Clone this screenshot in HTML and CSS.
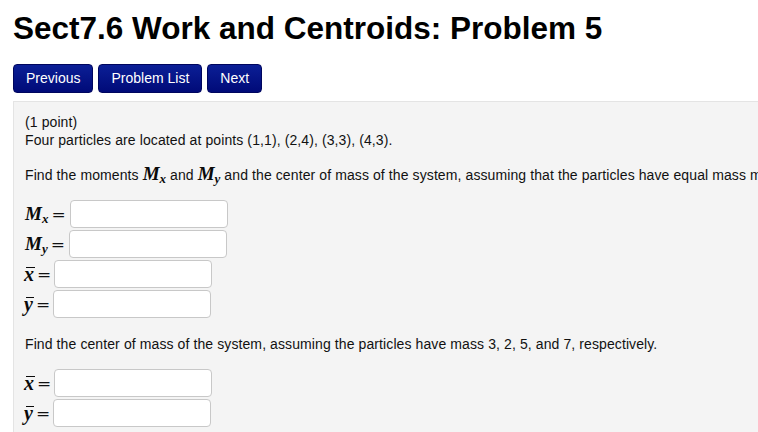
FILE: index.html
```
<!DOCTYPE html>
<html lang="en">
<head>
    <meta charset="UTF-8">
    <meta name="viewport" content="width=device-width, initial-scale=1.0">
    <title>Sect7.6 Work and Centroids: Problem 5</title>
    <link rel="stylesheet" href="styles.css">
</head>
<body>
    <h1 class="page-title">Sect7.6 Work and Centroids: Problem 5</h1>

    <div class="nav-buttons">
        <a class="nav-btn" href="#">Previous</a>
        <a class="nav-btn" href="#">Problem List</a>
        <a class="nav-btn" href="#">Next</a>
    </div>

    <div class="problem">
        <p class="intro">(1 point)<br>Four particles are located at points (1,1), (2,4), (3,3), (4,3).</p>

        <p class="question">Find the moments <span class="math">M<sub>x</sub></span> and <span class="math">M<sub>y</sub></span> and the center of mass of the system, assuming that the particles have equal mass m.</p>

        <div class="answers">
            <div class="answer-row">
                <span class="math">M<sub>x</sub></span><span class="eq">=</span>
                <input type="text" class="answer">
            </div>
            <div class="answer-row">
                <span class="math">M<sub>y</sub></span><span class="eq">=</span>
                <input type="text" class="answer">
            </div>
            <div class="answer-row">
                <span class="math bar">x</span><span class="eq">=</span>
                <input type="text" class="answer">
            </div>
            <div class="answer-row">
                <span class="math bar">y</span><span class="eq">=</span>
                <input type="text" class="answer">
            </div>
        </div>

        <p class="question">Find the center of mass of the system, assuming the particles have mass 3, 2, 5, and 7, respectively.</p>

        <div class="answers">
            <div class="answer-row">
                <span class="math bar">x</span><span class="eq">=</span>
                <input type="text" class="answer">
            </div>
            <div class="answer-row">
                <span class="math bar">y</span><span class="eq">=</span>
                <input type="text" class="answer">
            </div>
        </div>
    </div>
</body>
</html>
```

FILE: styles.css
```
html, body {
    overflow: hidden;
}

body {
    font-family: 'Liberation Sans', Arial, sans-serif;
    font-size: 14px;
    letter-spacing: 0.1px;
    color: #111;
    margin: 0;
    padding: 0 13px;
    background-color: #fff;
}

.page-title {
    font-size: 31.5px;
    font-weight: bold;
    letter-spacing: 0;
    color: #000;
    margin: 8px 0 16px;
    line-height: 40px;
    white-space: nowrap;
}

.nav-buttons {
    display: flex;
    gap: 5px;
    margin-bottom: 8px;
}

.nav-btn {
    display: block;
    height: 27px;
    line-height: 27px;
    padding: 0 12px;
    color: #fff;
    text-decoration: none;
    font-size: 14px;
    letter-spacing: 0;
    border: 1px solid #00065e;
    border-radius: 4px;
    background: linear-gradient(#0b1f96, #000a78);
}

.problem {
    width: 900px;
    padding: 11px 11px 20px;
    background-color: #f4f4f4;
    border: 1px solid #e4e4e4;
    white-space: nowrap;
}

.problem p {
    margin: 0;
    line-height: 18px;
}

.intro {
    margin-bottom: 17px !important;
}

.question .math {
    line-height: 0;
}

.answers {
    margin: 16px 0 17px;
}

.answer-row {
    display: flex;
    align-items: center;
    height: 28px;
    margin-bottom: 2px;
}

.math {
    font-family: 'Liberation Serif', 'DejaVu Serif', serif;
    font-style: italic;
    font-weight: bold;
    font-size: 19px;
    letter-spacing: 0;
    color: #0a0a0a;
}

.math sub {
    font-size: 13px;
    vertical-align: -3px;
    line-height: 0;
}

.bar {
    position: relative;
    font-size: 20px;
    margin-left: -2px;
    padding: 0 1px;
}

.bar::after {
    content: "";
    position: absolute;
    left: 3px;
    right: 0;
    top: 4px;
    border-top: 1.5px solid #0a0a0a;
}

.bar + .eq {
    margin: 0 3px 0 2px;
}

.eq {
    font-family: 'DejaVu Serif', serif;
    font-size: 17px;
    margin: 0 4px 0 3px;
}

.answer {
    width: 148px;
    height: 26px;
    padding: 0 4px;
    box-sizing: content-box;
    border: 1px solid #c8c8c8;
    border-radius: 4px;
    background: #fff;
    margin: 0;
}
```
